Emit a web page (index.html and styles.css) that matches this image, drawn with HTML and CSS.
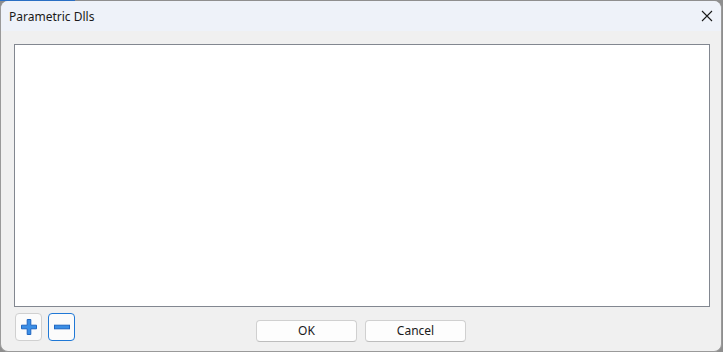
FILE: index.html
```html
<!DOCTYPE html>
<html>
<head>
<meta charset="utf-8">
<link rel="stylesheet" href="styles.css">
</head>
<body>
<div class="backdrop">
  <div class="strip"><span class="strip-blue"></span></div>
  <div class="window">
    <div class="titlebar">
      <span class="title">Parametric Dlls</span>
      <span class="close">
        <svg width="12" height="12" viewBox="0 0 12 12"><path d="M1 1 L11 11 M11 1 L1 11" stroke="#1a1a1a" stroke-width="1.1" fill="none"/></svg>
      </span>
    </div>
    <div class="content">
      <div class="listbox"></div>
      <div class="footer">
        <div class="icon-buttons">
          <button class="icon-btn">
            <svg width="18" height="18" viewBox="0 0 18 18"><path d="M7.2 1.5 H10.8 V7.2 H16.5 V10.8 H10.8 V16.5 H7.2 V10.8 H1.5 V7.2 H7.2 Z" fill="#3a8ee6" stroke="#1f66c1" stroke-width="1"/></svg>
          </button>
          <button class="icon-btn focused">
            <svg width="18" height="18" viewBox="0 0 18 18"><rect x="1.5" y="7.2" width="15" height="3.6" fill="#3a8ee6" stroke="#1f66c1" stroke-width="1"/></svg>
          </button>
        </div>
        <div class="buttons">
          <button class="btn">OK</button>
          <button class="btn">Cancel</button>
        </div>
      </div>
    </div>
  </div>
</div>
</body>
</html>
```

FILE: styles.css
```css
html, body {
  margin: 0;
  padding: 0;
  width: 723px;
  height: 352px;
  overflow: hidden;
  background: #8e8e8e;
  font-family: "Segoe UI", "Noto Sans", "Open Sans", sans-serif;
}
.backdrop {
  width: 723px;
  height: 352px;
  display: flex;
  flex-direction: column;
}
.strip {
  height: 1px;
  background: #8f8f8f;
  display: flex;
}
.strip-blue {
  width: 75px;
  background: #2a6fc4;
}
.window {
  flex: 1;
  box-sizing: border-box;
  width: 722px;
  border: 1px solid #9a9a9a;
  border-top: none;
  border-radius: 8px;
  background: #f0f0f0;
  display: flex;
  flex-direction: column;
  overflow: hidden;
}
.titlebar {
  height: 30px;
  background: #eef2f9;
  display: flex;
  align-items: center;
  justify-content: space-between;
  padding: 0 6px 0 8px;
}
.title {
  font-size: 12px;
  color: #1a1a1a;
  line-height: 16px;
  margin-top: 1px;
}
.close {
  width: 14px;
  height: 14px;
  display: flex;
  align-items: center;
  justify-content: center;
  margin-right: 1px;
}
.content {
  flex: 1;
  display: flex;
  flex-direction: column;
  padding: 13px 11px 0 13px;
}
.listbox {
  height: 261px;
  background: #ffffff;
  border: 1px solid #828790;
}
.footer {
  display: flex;
  align-items: flex-start;
  margin-top: 6px;
}
.icon-buttons {
  display: flex;
  gap: 6px;
  margin-left: 1px;
}
.icon-btn {
  width: 27px;
  height: 28px;
  box-sizing: border-box;
  border: 1px solid #d0d0d0;
  border-radius: 4px;
  background: #fbfbfb;
  padding: 0;
  display: flex;
  align-items: center;
  justify-content: center;
}
.icon-btn.focused {
  border: 1.5px solid #1f78d6;
}
.buttons {
  display: flex;
  gap: 8px;
  margin-left: 181px;
  margin-top: 7px;
}
.btn {
  width: 101px;
  height: 22px;
  box-sizing: border-box;
  border: 1px solid #d0d0d0;
  border-bottom-color: #bdbdbd;
  border-radius: 4px;
  background: #fdfdfd;
  font-family: "Segoe UI", "Noto Sans", "Open Sans", sans-serif;
  font-size: 12px;
  color: #1a1a1a;
  padding: 0;
  line-height: 18px;
}
```
